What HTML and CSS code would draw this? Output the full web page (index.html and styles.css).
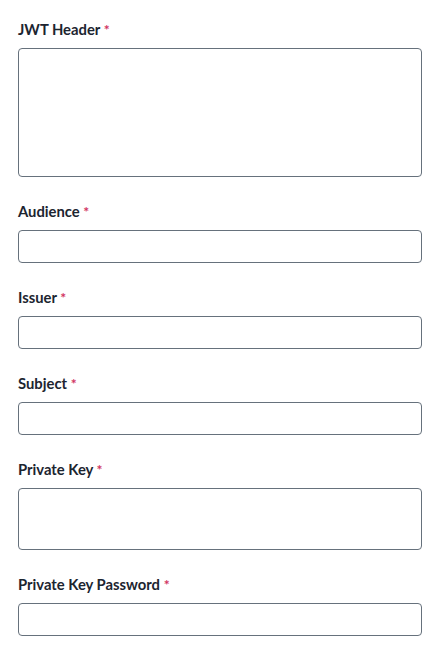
FILE: index.html
```html
<!DOCTYPE html>
<html lang="en">
<head>
<meta charset="utf-8">
<title>JWT</title>
<link rel="stylesheet" href="styles.css">
</head>
<body>
<form class="form">
  <div class="field">
    <label class="label">JWT Header <span class="req">*</span></label>
    <textarea class="control area-lg"></textarea>
  </div>
  <div class="field">
    <label class="label">Audience <span class="req">*</span></label>
    <input class="control input" type="text">
  </div>
  <div class="field">
    <label class="label">Issuer <span class="req">*</span></label>
    <input class="control input" type="text">
  </div>
  <div class="field">
    <label class="label">Subject <span class="req">*</span></label>
    <input class="control input" type="text">
  </div>
  <div class="field">
    <label class="label">Private Key <span class="req">*</span></label>
    <textarea class="control area-sm"></textarea>
  </div>
  <div class="field">
    <label class="label">Private Key Password <span class="req">*</span></label>
    <input class="control input" type="password">
  </div>
</form>
</body>
</html>
```
FILE: styles.css
```css
html, body {
  margin: 0;
  padding: 0;
  background: #ffffff;
}
body {
  font-family: Lato, "Open Sans", sans-serif;
  color: #1f2933;
  overflow: hidden;
}
.form {
  display: flex;
  flex-direction: column;
  gap: 24px;
  padding: 19px 18px 0 18px;
}
.field {
  display: flex;
  flex-direction: column;
  gap: 9px;
}
.label {
  display: block;
  height: 20px;
  font-size: 14.8px;
  font-weight: 700;
  line-height: 20px;
  color: #1c2530;
}
.req {
  color: #d1335f;
  font-size: 14px;
  line-height: 1;
}
.control {
  display: block;
  box-sizing: border-box;
  width: 100%;
  margin: 0;
  border: 1px solid #66717c;
  border-radius: 4px;
  background: #ffffff;
  font-family: inherit;
  font-size: 14px;
  resize: none;
  outline: none;
}
.input {
  height: 33px;
}
.area-lg {
  height: 129px;
}
.area-sm {
  height: 62px;
}
```
